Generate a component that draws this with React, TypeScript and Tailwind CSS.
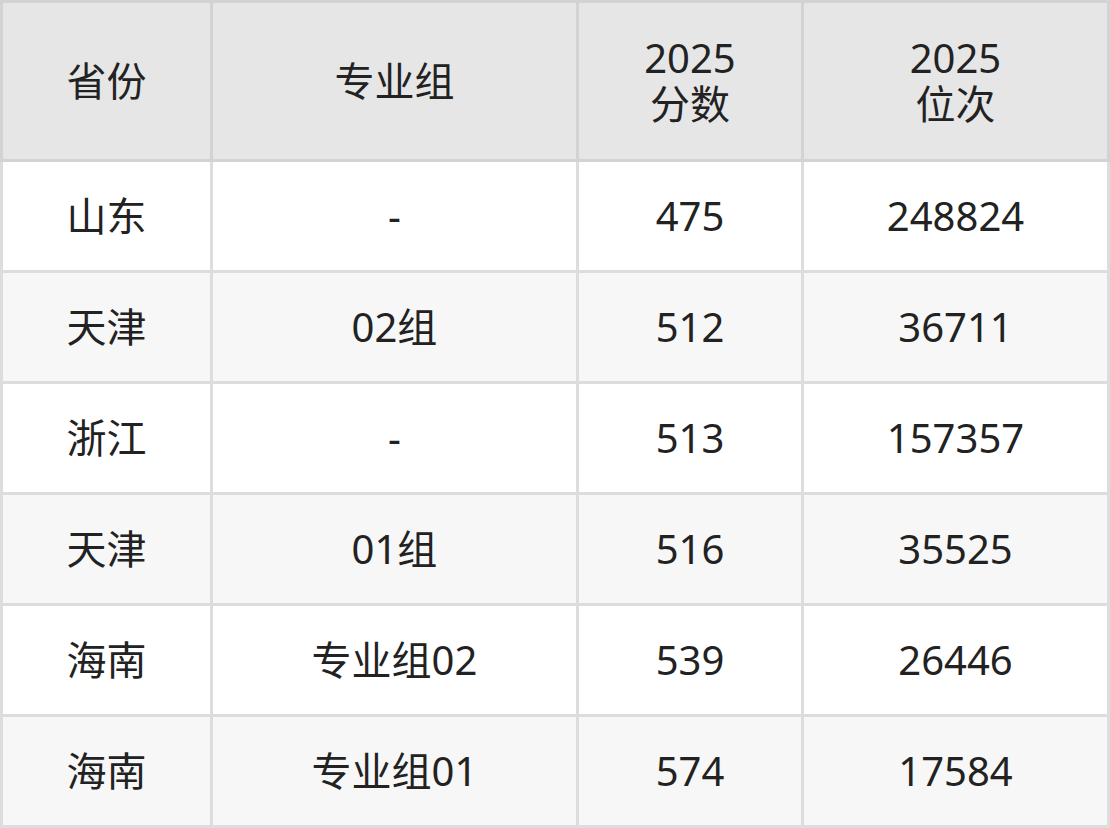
import React from "react";

const rows = [
  ["山东", "-", "475", "248824"],
  ["天津", "02组", "512", "36711"],
  ["浙江", "-", "513", "157357"],
  ["天津", "01组", "516", "35525"],
  ["海南", "专业组02", "539", "26446"],
  ["海南", "专业组01", "574", "17584"],
];

const cols = "grid grid-cols-[207px_363px_222px_303px] gap-[3px]";

export default function App() {
  return (
    <div
      className="w-[1110px] h-[828px] text-[#222222] text-[40px]"
      style={{ fontFamily: '"Noto Sans", "Noto Sans CJK SC", sans-serif' }}
    >
      <div className={`${cols} bg-[#d3d3d3] p-[3px]`}>
        <div className="h-[156px] bg-[#e6e6e6] flex items-center justify-center leading-[46px]">省份</div>
        <div className="h-[156px] bg-[#e6e6e6] flex items-center justify-center leading-[46px]">专业组</div>
        <div className="h-[156px] bg-[#e6e6e6] flex flex-col items-center justify-center leading-[46px]">
          <span>2025</span>
          <span>分数</span>
        </div>
        <div className="h-[156px] bg-[#e6e6e6] flex flex-col items-center justify-center leading-[46px]">
          <span>2025</span>
          <span>位次</span>
        </div>
      </div>
      <div className={`${cols} bg-[#dddddd] px-[3px] pb-[3px]`}>
        {rows.map((r, i) =>
          r.map((c, j) => (
            <div
              key={`${i}-${j}`}
              className={`h-[108px] flex items-center justify-center ${i % 2 === 0 ? "bg-white" : "bg-[#f7f7f7]"}`}
            >
              {c}
            </div>
          ))
        )}
      </div>
    </div>
  );
}
